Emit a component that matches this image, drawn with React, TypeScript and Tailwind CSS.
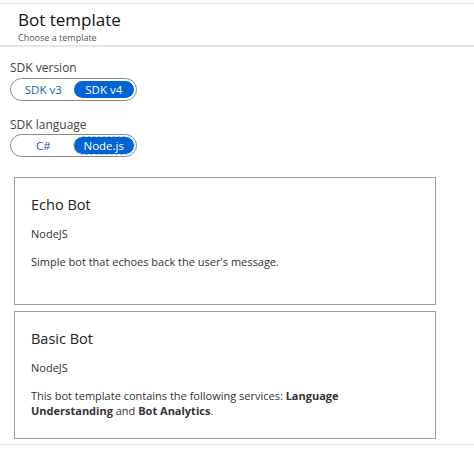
import React, { useState } from "react";

const font = { fontFamily: '"Open Sans", "Noto Sans", sans-serif' };

type Option = { value: string; label: string };

const Toggle = ({ options, value, onChange, focused }: { options: Option[]; value: string; onChange: (v: string) => void; focused?: boolean }) => (
  <div className="flex w-[127px] h-[23px] items-center rounded-full border border-[#8a8a8a] px-[2px]">
    {options.map((o) => {
      const active = o.value === value;
      return (
        <button
          key={o.value}
          onClick={() => onChange(o.value)}
          className={
            active
              ? `flex-1 h-[17px] rounded-full bg-[#0064d2] text-white text-[11.5px] leading-none ${focused ? "outline outline-1 outline-dashed outline-[#9cc3f0]" : ""}`
              : "flex-1 h-[17px] rounded-full text-[#1a5fb4] text-[11.5px] leading-none"
          }
        >
          {o.label}
        </button>
      );
    })}
  </div>
);

const Card = ({ title, lang, children }: { title: string; lang: string; children: React.ReactNode }) => (
  <div className="h-[128px] border border-[#a0a0a0] px-4 pt-[17px]">
    <h3 className="text-[14.5px] text-[#222] leading-5">{title}</h3>
    <p className="mt-[11px] text-[11px] text-[#333] leading-4">{lang}</p>
    <p className="mt-[12px] text-[11px] text-[#333] leading-[15px]">{children}</p>
  </div>
);

export default function App() {
  const [sdk, setSdk] = useState("v4");
  const [lang, setLang] = useState("node");

  return (
    <div className="w-[474px] h-[454px] bg-white pt-[3px]" style={font}>
      <div className="border-t border-[#e3e3e3] border-b-2 border-b-[#e6e6e6] h-[44px] pl-[18px] pt-[4px]">
        <h1 className="text-[17px] font-medium leading-6 text-[#111]">Bot template</h1>
        <p className="text-[9px] leading-3 text-[#555]">Choose a template</p>
      </div>

      <div className="px-[10px] pt-[13px]">
        <div className="text-[12px] leading-4 text-[#444]">SDK version</div>
        <div className="mt-[2px]">
          <Toggle
            options={[{ value: "v3", label: "SDK v3" }, { value: "v4", label: "SDK v4" }]}
            value={sdk}
            onChange={setSdk}
          />
        </div>

        <div className="mt-[16px] text-[12px] leading-4 text-[#444]">SDK language</div>
        <div className="mt-[1px]">
          <Toggle
            options={[{ value: "cs", label: "C#" }, { value: "node", label: "Node.js" }]}
            value={lang}
            onChange={setLang}
            focused
          />
        </div>
      </div>

      <div className="ml-[14px] w-[422px] mt-[20px] flex flex-col gap-[6px]">
        <Card title="Echo Bot" lang="NodeJS">
          Simple bot that echoes back the user's message.
        </Card>
        <Card title="Basic Bot" lang="NodeJS">
          This bot template contains the following services: <b>Language</b>
          <br />
          <b>Understanding</b> and <b>Bot Analytics</b>.
        </Card>
      </div>

      <div className="mt-[5px] border-t border-[#e3e3e3]" />
    </div>
  );
}
